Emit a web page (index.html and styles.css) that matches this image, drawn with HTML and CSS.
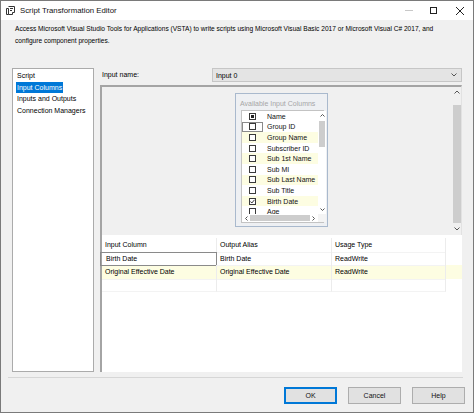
FILE: index.html
```html
<!DOCTYPE html>
<html lang="en">
<head>
  <meta charset="UTF-8" />
  <title>Script Transformation Editor</title>
  <link rel="stylesheet" href="styles.css">
</head>
<body>
  <div class="window">
    <div class="titlebar">
      <svg class="app-icon" width="9" height="9" viewBox="0 0 9 9">
        <path d="M2.5 .5h6v6h-2M.5 2.5h2v6h-2zM2.5 8.5h4v-2M4 2.5h3M4 4.5h2" fill="none" stroke="#333" stroke-width="1"/>
      </svg>
      <span class="title">Script Transformation Editor</span>
      <div class="controls">
        <span class="ctl-min"></span>
        <span class="ctl-max"></span>
        <svg class="ctl-close" width="8" height="8" viewBox="0 0 8 8">
          <path d="M0 0L8 8M8 0L0 8" stroke="#222" stroke-width="1"/>
        </svg>
      </div>
    </div>

    <p class="desc">Access Microsoft Visual Studio Tools for Applications (VSTA) to write scripts using Microsoft Visual Basic 2017 or Microsoft Visual C# 2017, and<br />configure component properties.</p>

    <div class="main">
      <ul class="nav">
        <li>Script</li>
        <li><span class="selected">Input Columns</span></li>
        <li>Inputs and Outputs</li>
        <li>Connection Managers</li>
      </ul>

      <div class="pane">
        <div class="input-row">
          <label>Input name:</label>
          <div class="select">
            <span>Input 0</span>
            <svg width="6" height="4" viewBox="0 0 6 4"><path d="M.5 .5L3 3l2.5-2.5" fill="none" stroke="#555"/></svg>
          </div>
        </div>

        <div class="upper">
          <div class="avail">
            <div class="avail-title">Available Input Columns</div>
            <div class="avail-grid">
              <div class="avail-rows">
                <div class="arow head">
                  <div class="chk-cell"><span class="box mixed"></span></div>
                  <div class="name">Name</div>
                </div>
                <div class="arow">
                  <div class="chk-cell focus"><span class="box"></span></div>
                  <div class="name">Group ID</div>
                </div>
                <div class="arow alt">
                  <div class="chk-cell"><span class="box"></span></div>
                  <div class="name">Group Name</div>
                </div>
                <div class="arow">
                  <div class="chk-cell"><span class="box"></span></div>
                  <div class="name">Subscriber ID</div>
                </div>
                <div class="arow alt">
                  <div class="chk-cell"><span class="box"></span></div>
                  <div class="name">Sub 1st Name</div>
                </div>
                <div class="arow">
                  <div class="chk-cell"><span class="box"></span></div>
                  <div class="name">Sub MI</div>
                </div>
                <div class="arow alt">
                  <div class="chk-cell"><span class="box"></span></div>
                  <div class="name">Sub Last Name</div>
                </div>
                <div class="arow">
                  <div class="chk-cell"><span class="box"></span></div>
                  <div class="name">Sub Title</div>
                </div>
                <div class="arow alt">
                  <div class="chk-cell">
                    <span class="box">
                      <svg width="5" height="5" viewBox="0 0 5 5"><path d="M.5 2.5l1.3 1.5L4.5 .8" fill="none" stroke="#222" stroke-width="0.9"/></svg>
                    </span>
                  </div>
                  <div class="name">Birth Date</div>
                </div>
                <div class="arow">
                  <div class="chk-cell"><span class="box"></span></div>
                  <div class="name">Age</div>
                </div>
              </div>
              <div class="vscroll">
                <svg width="5" height="3" viewBox="0 0 5 3"><path d="M.5 2.5L2.5 .5l2 2" fill="none" stroke="#555"/></svg>
                <div class="vthumb"></div>
                <svg class="down" width="5" height="3" viewBox="0 0 5 3"><path d="M.5 .5L2.5 2.5l2-2" fill="none" stroke="#555"/></svg>
              </div>
              <div class="hscroll">
                <svg width="3" height="5" viewBox="0 0 3 5"><path d="M2.5 .5L.5 2.5l2 2" fill="none" stroke="#555"/></svg>
                <div class="hthumb"></div>
                <svg width="3" height="5" viewBox="0 0 3 5"><path d="M.5 .5L2.5 2.5l-2 2" fill="none" stroke="#555"/></svg>
              </div>
              <div class="corner"></div>
            </div>
          </div>

          <div class="scroll">
            <svg width="6" height="4" viewBox="0 0 6 4"><path d="M.5 3.5L3 1l2.5 2.5" fill="none" stroke="#555"/></svg>
            <div class="thumb"></div>
            <svg width="6" height="4" viewBox="0 0 6 4"><path d="M.5 .5L3 3l2.5-2.5" fill="none" stroke="#555"/></svg>
          </div>
        </div>

        <div class="grid">
          <div class="grow head">
            <div>Input Column</div>
            <div>Output Alias</div>
            <div>Usage Type</div>
          </div>
          <div class="grow">
            <div class="focus">Birth Date</div>
            <div>Birth Date</div>
            <div>ReadWrite</div>
          </div>
          <div class="grow alt">
            <div>Original Effective Date</div>
            <div>Original Effective Date</div>
            <div>ReadWrite</div>
          </div>
          <div class="grow empty">
            <div></div>
            <div></div>
            <div></div>
          </div>
        </div>
      </div>
    </div>

    <div class="footer">
      <div class="sep"></div>
      <div class="buttons">
        <button class="default">OK</button>
        <button>Cancel</button>
        <button>Help</button>
      </div>
    </div>
  </div>
</body>
</html>
```

FILE: styles.css
```css
* {
  box-sizing: border-box;
}

body {
  margin: 0;
  padding: 0;
  background: #f0f0f0;
}

.window {
  width: 474px;
  height: 413px;
  border: 1px solid #7a7a7a;
  background: #f0f0f0;
  display: flex;
  flex-direction: column;
  font-family: "Liberation Sans", Arial, sans-serif;
  font-size: 7px;
  color: #000;
}

/* title bar */
.titlebar {
  height: 19px;
  flex: none;
  background: #fff;
  display: flex;
  align-items: center;
  padding-left: 5px;
  padding-right: 9px;
}

.title {
  margin-left: 5px;
  color: #111;
  font-size: 7.8px;
}

.controls {
  margin-left: auto;
  display: flex;
  align-items: center;
}

.ctl-min {
  width: 8px;
  height: 1px;
  background: #c8c8c8;
}

.ctl-max {
  width: 7px;
  height: 7px;
  border: 1px solid #222;
  margin-left: 17px;
}

.ctl-close {
  margin-left: 19px;
}

/* description */
.desc {
  margin: 0;
  padding: 3px 12px 0 14px;
  line-height: 12px;
  height: 27px;
  flex: none;
  font-size: 6.6px;
}

/* main area */
.main {
  margin-top: 21px;
  height: 304px;
  flex: none;
  display: flex;
  gap: 6px;
  padding: 0 11px;
}

.nav {
  list-style: none;
  margin: 0;
  padding: 1px 3px;
  width: 82px;
  flex: none;
  background: #fff;
  border: 1px solid #ababab;
}

.nav li {
  line-height: 11.5px;
  height: 11.5px;
  padding-left: 1px;
}

.nav .selected {
  display: inline-block;
  background: #0078d7;
  color: #fff;
  margin-left: -1px;
  padding: 0 1px;
  line-height: 11px;
}

.pane {
  flex: 1;
  display: flex;
  flex-direction: column;
}

.input-row {
  height: 14px;
  display: flex;
  flex: none;
}

.input-row label {
  width: 112px;
  flex: none;
  line-height: 14px;
  padding-left: 2px;
}

.select {
  flex: 1;
  background: #e4e4e4;
  border: 1px solid #c6c6c6;
  display: flex;
  align-items: center;
  justify-content: space-between;
  padding: 0 4px 0 3px;
}

/* upper panel with available columns */
.upper {
  margin-top: 3px;
  height: 150px;
  flex: none;
  border-top: 2px solid #a4a4a4;
  border-left: 2px solid #a4a4a4;
  border-right: 1px solid #e2e2e2;
  display: flex;
  align-items: flex-start;
}

.avail {
  margin-left: 133px;
  margin-top: 6px;
  width: 93px;
  height: 134px;
  border: 1px solid #a9b9cd;
  background: #eef0f3;
}

.avail-title {
  color: #a6a6a6;
  padding: 3px 0 0 4px;
  line-height: 13px;
  height: 16px;
}

.avail-grid {
  margin-left: 5px;
  width: 83px;
  height: 113px;
  background: #fff;
  border: 1px solid #c3c3c3;
  display: grid;
  grid-template-columns: 1fr 8px;
  grid-template-rows: 1fr 8px;
}

.avail-rows {
  overflow: hidden;
}

.arow {
  height: 10.6px;
  display: flex;
  align-items: center;
}

.arow.alt {
  background: #fdfde2;
}

.chk-cell {
  width: 21px;
  height: 100%;
  flex: none;
  display: flex;
  align-items: center;
  justify-content: center;
}

.chk-cell.focus {
  outline: 1px solid #8a8a8a;
  outline-offset: -1px;
}

.box {
  width: 7px;
  height: 7px;
  border: 1px solid #3a3a3a;
  background: #fff;
  display: flex;
  align-items: center;
  justify-content: center;
}

.box.mixed::after {
  content: "";
  width: 3px;
  height: 3px;
  background: #222;
}

.name {
  padding-left: 4px;
  white-space: nowrap;
  color: #111;
}

.vscroll {
  display: flex;
  flex-direction: column;
  align-items: center;
  padding-top: 3px;
  background: #fff;
}

.vthumb {
  margin-top: 4px;
  width: 6px;
  height: 26px;
  background: #cdcdcd;
}

.vscroll .down {
  margin-top: auto;
  margin-bottom: 3px;
}

.hscroll {
  display: flex;
  align-items: center;
  padding: 0 3px;
  gap: 2px;
}

.hthumb {
  width: 60px;
  height: 6px;
  background: #cdcdcd;
}

.corner {
  background: #f4f4f4;
}

.scroll {
  margin-left: auto;
  width: 9px;
  height: 148px;
  display: flex;
  flex-direction: column;
  align-items: center;
  padding-top: 3px;
}

.scroll .thumb {
  margin-top: 11px;
  width: 8px;
  height: 118px;
  background: #cdcdcd;
  margin-bottom: 4px;
}

/* lower grid */
.grid {
  flex: 1;
  background: #fff;
  border-left: 2px solid #a4a4a4;
  padding-top: 3px;
}

.grow {
  display: grid;
  grid-template-columns: 115px 115px 114px;
  height: 13.5px;
}

.grow > div {
  line-height: 13.5px;
  padding-left: 3px;
  border-right: 1px solid #ececec;
  border-bottom: 1px solid #f3f3f3;
  white-space: nowrap;
}

.grow.alt {
  background: #fdfde2;
}

.grow .focus {
  border: 1px solid #8a8a8a;
  line-height: 11.5px;
  margin-left: -2px;
  padding-left: 5px;
}

/* footer */
.footer {
  flex: none;
  padding-top: 5px;
}

.sep {
  height: 1px;
  background: #d6d6d6;
  margin: 0 10px 0 7px;
}

.buttons {
  display: flex;
  justify-content: flex-end;
  gap: 11px;
  padding-right: 8px;
  margin-top: 9px;
}

.buttons button {
  width: 53px;
  height: 17px;
  background: #e1e1e1;
  border: 1px solid #adadad;
  font-family: "Liberation Sans", Arial, sans-serif;
  font-size: 7px;
  color: #111;
  padding: 0;
}

.buttons button.default {
  border-color: #0078d7;
  box-shadow: inset 0 0 0 1px #0078d7;
}
```
